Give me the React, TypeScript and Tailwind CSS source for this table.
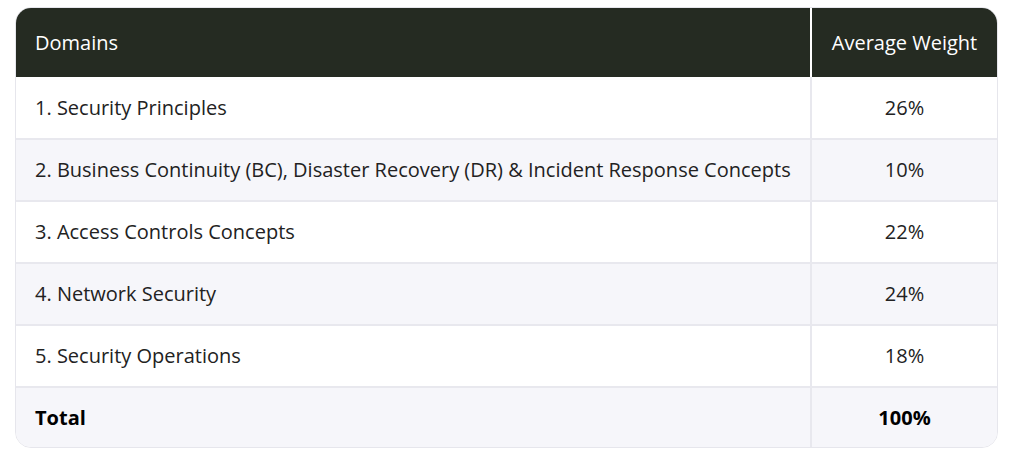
const rows = [
  { domain: '1. Security Principles', weight: '26%' },
  { domain: '2. Business Continuity (BC), Disaster Recovery (DR) & Incident Response Concepts', weight: '10%' },
  { domain: '3. Access Controls Concepts', weight: '22%' },
  { domain: '4. Network Security', weight: '24%' },
  { domain: '5. Security Operations', weight: '18%' },
];

function App() {
  return (
    <div className="bg-white pt-[7px] pl-[15px] pr-[12px] font-['Open_Sans',sans-serif]">
      <div className="w-[983px] overflow-hidden rounded-[16px] border border-[#e6e6ec]">
        <table className="w-full border-collapse text-[20px] text-[#222]">
          <thead>
            <tr className="h-[69px] bg-[#252b22] text-white">
              <th className="pl-[19px] text-left font-normal">Domains</th>
              <th className="w-[186px] border-l-2 border-white text-center font-normal">Average Weight</th>
            </tr>
          </thead>
          <tbody>
            {rows.map((r, i) => (
              <tr key={i} className={`h-[62px] border-b-2 border-[#e8e8ee] ${i % 2 ? 'bg-[#f6f6fa]' : 'bg-white'}`}>
                <td className="pl-[19px]">{r.domain}</td>
                <td className="border-l-2 border-[#e8e8ee] text-center">{r.weight}</td>
              </tr>
            ))}
            <tr className="h-[60px] bg-[#f6f6fa] font-bold text-black">
              <td className="pl-[19px]">Total</td>
              <td className="border-l-2 border-[#e8e8ee] text-center">100%</td>
            </tr>
          </tbody>
        </table>
      </div>
    </div>
  );
}

export default App;
